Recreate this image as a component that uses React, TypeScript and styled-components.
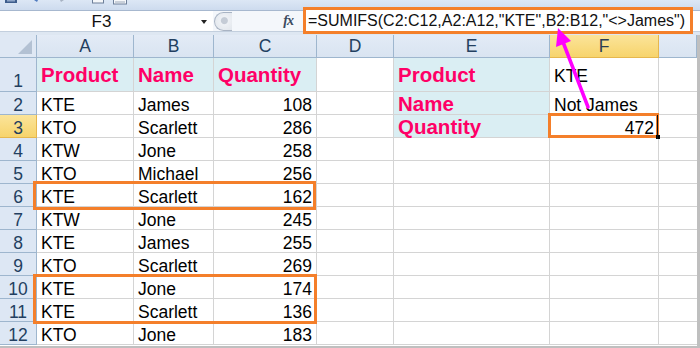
import React from "react";
import styled, { createGlobalStyle } from "styled-components";

const GlobalStyle = createGlobalStyle`
  html, body { margin: 0; padding: 0; background: #fff; }
  body { font-family: "Liberation Sans", Arial, sans-serif; }
`;

const LETTERS = ["A", "B", "C", "D", "E", "F", "G"];
const ORANGE = "#f47f2a";
const PINK = "#ff0066";

type CellData = { text?: string; head?: boolean; num?: boolean };

const rows: CellData[][] = [
  [{ text: "Product", head: true }, { text: "Name", head: true }, { text: "Quantity", head: true }, {}, { text: "Product", head: true }, { text: "KTE" }, {}],
  [{ text: "KTE" }, { text: "James" }, { text: "108", num: true }, {}, { text: "Name", head: true }, { text: "Not James" }, {}],
  [{ text: "KTO" }, { text: "Scarlett" }, { text: "286", num: true }, {}, { text: "Quantity", head: true }, { text: "472", num: true }, {}],
  ...[
    ["KTW", "Jone", "258"],
    ["KTO", "Michael", "256"],
    ["KTE", "Scarlett", "162"],
    ["KTW", "Jone", "245"],
    ["KTE", "James", "255"],
    ["KTO", "Scarlett", "269"],
    ["KTE", "Jone", "174"],
    ["KTE", "Scarlett", "136"],
    ["KTO", "Jone", "183"],
  ].map(([a, b, c]) => [{ text: a }, { text: b }, { text: c, num: true }, {}, {}, {}, {}]),
];

const App = () => {
  return (
    <Page>
      <GlobalStyle />
      <TopStrip>
        <svg width="700" height="10" viewBox="0 0 700 10">
          <rect x="5" y="0" width="12" height="3" fill="#3d5d8c" />
          <rect x="7" y="0" width="8" height="1.5" fill="#8fa6c8" />
          <path d="M34 0 L38 0 L37 2 Z" fill="#4f7bbf" />
          <path d="M60 0 L64 0 L61 2 Z" fill="#a7b2c2" />
          <rect x="92.5" y="-2" width="11" height="5" fill="#f5f7fa" stroke="#6d7f99" />
          <rect x="113.5" y="-2" width="13" height="6" fill="#f7f8fa" stroke="#6d7f99" />
          <line x1="115" y1="2" x2="125" y2="2" stroke="#9aa8bb" />
        </svg>
      </TopStrip>
      <FormulaBar>
        <NameBox>
          <NameText>F3</NameText>
          <DropArrow />
        </NameBox>
        <Controls>
          <Grip />
          <Fx>fx</Fx>
        </Controls>
        <FormulaField>=SUMIFS(C2:C12,A2:A12,"KTE",B2:B12,"&lt;&gt;James")</FormulaField>
      </FormulaBar>
      <Separator />
      <SheetFrame>
        <Sheet>
          <Corner>
            <svg width="36" height="22" viewBox="0 0 36 22">
              <polygon points="32,5 32,19 18,19" fill="#b3c1d3" />
            </svg>
          </Corner>
          {LETTERS.map((l) => (
            <ColHead key={l} $active={l === "F"} $clipped={l === "G"}>{l}</ColHead>
          ))}
          {rows.map((row, r) => (
            <React.Fragment key={r}>
              <RowHead $active={r === 2} $tall={r === 0}>{r + 1}</RowHead>
              {row.map((c, i) => (
                <Cell key={i} $head={c.head} $num={c.num} $tall={r === 0} $last={i === 6}>
                  {c.text}
                </Cell>
              ))}
            </React.Fragment>
          ))}
          <RangeBox $top={146} $left={33} $w={283} $h={29} />
          <RangeBox $top={239} $left={33} $w={284} $h={50} />
          <ActiveBox $top={78} $left={548} $w={111} $h={25}>
            <FillHandle />
          </ActiveBox>
        </Sheet>
      </SheetFrame>
      <ArrowLayer width="700" height="348" viewBox="0 0 700 348">
        <line x1="563" y1="42" x2="588" y2="107" stroke="#ff00ff" strokeWidth="3.5" strokeLinecap="round" />
        <polygon points="558,28 571,41 556,47" fill="#ff00ff" />
      </ArrowLayer>
    </Page>
  );
};

export default App;

const Page = styled.div`
  position: relative;
  width: 700px;
  height: 348px;
  overflow: hidden;
  background: #fff;
  font-family: "Liberation Sans", Arial, sans-serif;
`;

const TopStrip = styled.div`
  height: 10px;
  background: linear-gradient(#dce7f5, #cddbee);
  svg { display: block; }
`;

const FormulaBar = styled.div`
  display: flex;
  height: 20px;
  border-top: 1px solid #a7b8cf;
  background: #fff;
`;

const NameBox = styled.div`
  width: 213px;
  display: flex;
  align-items: center;
  background: #fff;
`;

const NameText = styled.div`
  flex: 1;
  text-align: center;
  font-size: 17px;
  line-height: 1;
  color: #111;
  padding-left: 2px;
`;

const DropArrow = styled.div`
  width: 0;
  height: 0;
  margin-right: 6px;
  margin-top: 2px;
  border-left: 3.5px solid transparent;
  border-right: 3.5px solid transparent;
  border-top: 4px solid #222;
`;

const Controls = styled.div`
  width: 90px;
  display: flex;
  align-items: center;
  justify-content: space-between;
  background: #f4f7fb;
  padding-right: 10px;
  box-sizing: border-box;
`;

const Grip = styled.div`
  width: 18px;
  height: 19px;
  margin-left: 1px;
  border: 1px solid #a9b4c4;
  border-right: none;
  border-radius: 10px 0 0 10px;
  background: radial-gradient(circle at 55% 45%, #c5ccd6 0 3px, #eef1f5 4px, #dfe4ea 100%);
  box-sizing: border-box;
`;

const Fx = styled.div`
  font-family: "Liberation Serif", "Times New Roman", serif;
  font-style: italic;
  font-weight: bold;
  font-size: 14px;
  color: #3a4a60;
  letter-spacing: -1px;
`;

const FormulaField = styled.div`
  position: relative;
  z-index: 3;
  flex: 1;
  margin: -4px 7px -3px 0;
  border: 3px solid ${ORANGE};
  background: #fff;
  display: flex;
  align-items: center;
  padding-left: 2px;
  font-size: 16px;
  line-height: 1;
  color: #111;
  white-space: nowrap;
`;

const Separator = styled.div`
  height: 4px;
  background: #dee7f2;
  border-top: 1px solid #c3cfde;
  box-sizing: border-box;
`;

const SheetFrame = styled.div`
  width: 697px;
  padding-bottom: 1px;
  border-right: 3px solid #bfbfbf;
  border-bottom: 2px solid #bfbfbf;
  background: #fff;
`;

const Sheet = styled.div`
  position: relative;
  display: grid;
  grid-template-columns: 37px 97px 80px 103px 77px 156px 109px 38px;
  grid-template-rows: 23px 34px repeat(11, 23px);
`;

const Corner = styled.div`
  background: #dfe8f4;
  border-right: 1px solid #9eb6ce;
  border-bottom: 1px solid #9eb6ce;
  svg { display: block; }
`;

const ColHead = styled.div<{ $active?: boolean; $clipped?: boolean }>`
  display: flex;
  align-items: center;
  justify-content: ${(p) => (p.$clipped ? "flex-start" : "center")};
  padding-left: ${(p) => (p.$clipped ? "37px" : "0")};
  overflow: hidden;
  font-size: 17.5px;
  line-height: 1;
  color: ${(p) => (p.$active ? "#2c3c52" : "#233f60")};
  background: ${(p) => (p.$active ? "linear-gradient(#fbe49a, #f7d46c)" : "linear-gradient(#e3ebf6, #d9e4f1)")};
  border-right: 1px solid ${(p) => (p.$active ? "#e6b74e" : "#9eb6ce")};
  border-bottom: 1px solid ${(p) => (p.$active ? "#e6b74e" : "#9eb6ce")};
  padding-top: 1px;
`;

const RowHead = styled.div<{ $active?: boolean; $tall?: boolean }>`
  display: flex;
  align-items: flex-end;
  justify-content: center;
  font-size: 17.5px;
  line-height: 1;
  padding-bottom: ${(p) => (p.$tall ? "1px" : "0")};
  color: #233f60;
  background: ${(p) => (p.$active ? "linear-gradient(#fbe49a, #f7d46c)" : "#dde7f4")};
  border-right: 1px solid ${(p) => (p.$active ? "#e6b74e" : "#9eb6ce")};
  border-bottom: 1px solid ${(p) => (p.$active ? "#e6b74e" : "#9eb6ce")};
`;

const Cell = styled.div<{ $head?: boolean; $num?: boolean; $tall?: boolean; $last?: boolean }>`
  display: flex;
  align-items: flex-end;
  justify-content: ${(p) => (p.$num ? "flex-end" : "flex-start")};
  padding: ${(p) => (p.$tall ? "0 4px 6px 4px" : "0 4px 0 4px")};
  background: ${(p) => (p.$head ? "#daeef3" : "#fff")};
  color: ${(p) => (p.$head ? PINK : "#000")};
  font-weight: ${(p) => (p.$head ? "bold" : "normal")};
  font-size: ${(p) => (p.$head ? "20.5px" : "17.5px")};
  line-height: 1;
  white-space: nowrap;
  border-right: ${(p) => (p.$last ? "none" : "1px solid #d4d4d4")};
  border-bottom: 1px solid #d4d4d4;
`;

const RangeBox = styled.div<{ $top: number; $left: number; $w: number; $h: number }>`
  position: absolute;
  top: ${(p) => p.$top}px;
  left: ${(p) => p.$left}px;
  width: ${(p) => p.$w}px;
  height: ${(p) => p.$h}px;
  border: 3px solid ${ORANGE};
  box-sizing: border-box;
  pointer-events: none;
`;

const ActiveBox = styled(RangeBox)`
  &::after {
    content: "";
    position: absolute;
    right: -2px;
    top: -1px;
    width: 1px;
    height: 24px;
    background: #111;
  }
`;

const FillHandle = styled.div`
  position: absolute;
  right: -4px;
  bottom: -4px;
  width: 4px;
  height: 4px;
  background: #000;
`;

const ArrowLayer = styled.svg`
  position: absolute;
  left: 0;
  top: 0;
  z-index: 10;
  pointer-events: none;
`;
